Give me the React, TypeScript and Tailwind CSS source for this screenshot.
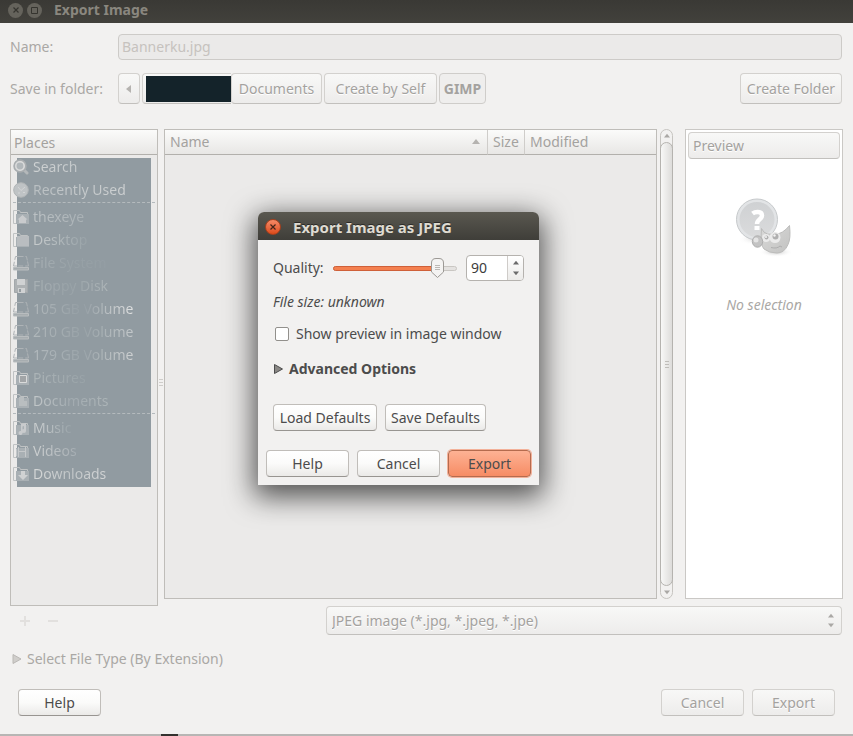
import React, { useState } from "react";

const places = [
  { name: "Search", icon: "search", tone: "from-[#cfd2d3] to-[#c3c8ca]" },
  { name: "Recently Used", icon: "recent", tone: "from-[#b9bfc2] to-[#ced1d2]" },
  { name: "thexeye", icon: "home", tone: "from-[#bcc2c5] to-[#a9b1b5]", line: true },
  { name: "Desktop", icon: "desktop", tone: "from-[#c8cccd] via-[#b0b8bb] to-[#98a2a7]" },
  { name: "File System", icon: "drive", tone: "from-[#a9b1b5] via-[#98a2a7] to-[#949ea4]" },
  { name: "Floppy Disk", icon: "floppy", tone: "from-[#a9b1b5] via-[#98a2a7] to-[#adb5b8]" },
  { name: "105 GB Volume", icon: "drive", tone: "from-[#b1b8bb] via-[#949ea4] to-[#e0e1e1]" },
  { name: "210 GB Volume", icon: "drive", tone: "from-[#b1b8bb] via-[#98a2a7] to-[#c3c8ca]" },
  { name: "179 GB Volume", icon: "drive", tone: "from-[#b3babe] via-[#9aa4a9] to-[#ced1d2]" },
  { name: "Pictures", icon: "pictures", tone: "from-[#adb5b8] to-[#98a2a7]" },
  { name: "Documents", icon: "documents", tone: "from-[#c3c8ca] via-[#a2abb0] to-[#adb5b8]" },
  { name: "Music", icon: "music", tone: "from-[#d0d3d4] to-[#9aa4a9]", line: true },
  { name: "Videos", icon: "videos", tone: "from-[#ced1d2] to-[#a5adb2]" },
  { name: "Downloads", icon: "downloads", tone: "from-[#d6d8d8] via-[#c0c5c7] to-[#d3d5d6]" },
];

const softButton =
  "rounded-[4px] border border-[#d3d1ce] border-b-[#c2c0bd] bg-linear-to-b from-[#f8f8f7] to-[#edeceb] text-[#a4a29f] [text-shadow:0_1px_0_#fff]";
const solidButton =
  "rounded-[4px] border border-[#c0bdb9] border-b-[#989591] bg-linear-to-b from-white via-[#fbfbfa] to-[#ebeae8] text-[#4c4c4c]";
const headCell =
  "h-[25px] border-b border-b-[#b2b0ac] bg-linear-to-b from-[#fbfbfa] to-[#e8e7e5] text-left font-normal text-[#a4a29f]";

const PlaceIcon = ({ icon }: { icon: string }) => {
  if (icon === "search") {
    return (
      <svg width="16" height="16" viewBox="0 0 16 16">
        <path d="M11 11l3 3" stroke="#b4b8ba" strokeWidth="3" strokeLinecap="round" />
        <circle cx="7" cy="7" r="6" fill="#b4babd" stroke="#a9adaf" strokeWidth="1.500" />
        <circle cx="7" cy="7" r="4.200" fill="#b1b7ba" stroke="#dcdcdc" strokeWidth="1.500" />
      </svg>
    );
  }
  if (icon === "recent") {
    return (
      <svg width="16" height="16" viewBox="0 0 16 16">
        <circle cx="8" cy="8" r="7.300" fill="#bfc3c5" stroke="#b0b4b6" />
        <path d="M5 5l3 3.500L12 5M5 11h2M10 10.500h2" fill="none" stroke="#d3d5d6" />
      </svg>
    );
  }
  if (icon === "drive") {
    return (
      <svg width="16" height="16" viewBox="0 0 16 16" fill="none">
        <path d="M2.500 1.500h11l2 9.500H.5z" stroke="#aeb3b6" strokeDasharray="8 2 5 1" />
        <path d="M.5 12.500h15v2.500H.5z" fill="#a7adb0" stroke="#b9bdbf" />
      </svg>
    );
  }
  if (icon === "floppy") {
    return (
      <svg width="16" height="16" viewBox="0 0 16 16">
        <path d="M1.500 1.500h13v13h-13z" fill="#aeb2b4" stroke="#a3a8ab" />
        <path d="M4 1h8v6H4z" fill="#d0d2d3" />
        <path d="M5 10h7v5H5z" fill="#d0d2d3" />
        <path d="M6 11h2v3H6z" fill="#969da1" />
      </svg>
    );
  }
  return (
    <svg width="16" height="16" viewBox="0 0 16 16">
      <path d="M.5 14.500v-13h6l1 2h7v11z" fill="none" stroke="#bfc2c3" />
      <path d="M3 5h13v10H3z" fill="#a9b0b4" />
      {icon === "home" && <path d="M9.500 6l5 4.500H13V14H6v-3.500H4.500z" fill="#c9cbcd" />}
      {icon === "desktop" && <path d="M4 4h12v10H4z" fill="#b9bdc0" />}
      {icon === "pictures" && <path d="M6.500 5.500h7v7h-7z" fill="#a2a5a7" stroke="#dadbdb" />}
      {icon === "documents" && <path d="M6 4h5v4h3v5H6z" fill="#b9bec0" />}
      {icon === "music" && <path d="M8 4l5-1v8a2 2 0 1 1-2-2V6L9.500 6.500V13a2 2 0 1 1-1.500-2z" fill="#c9cbcd" />}
      {icon === "videos" && <path d="M5.500 4v10M12.500 4v10M6 8.500h7M3.500 6v7" stroke="#c5c8ca" />}
      {icon === "downloads" && <path d="M8 5h4v4h3l-5 5-5-5h3z" fill="#d0d2d3" />}
    </svg>
  );
};

const Triangle = ({ dir, className }: { dir: "up" | "down" | "left" | "right"; className: string }) => {
  const shapes = {
    up: "0,6 4,1 8,6",
    down: "0,2 4,7 8,2",
    left: "6,0 1,4 6,8",
    right: "1,0 8,4 1,8",
  };
  return (
    <svg viewBox="0 0 8 8" className={className} aria-hidden="true">
      <polygon points={shapes[dir]} fill="currentColor" />
    </svg>
  );
};

const Wilber = () => (
  <svg width="58" height="60" viewBox="0 0 58 60" aria-hidden="true">
    <defs>
      <linearGradient id="disc" x1="0" y1="0" x2="0" y2="1">
        <stop offset="0" stopColor="#cfd1d3" />
        <stop offset="1" stopColor="#dadbdc" />
      </linearGradient>
      <linearGradient id="fur" x1="0" y1="0" x2="1" y2="1">
        <stop offset="0" stopColor="#dadad9" />
        <stop offset="1" stopColor="#c2c2c1" />
      </linearGradient>
      <radialGradient id="shade">
        <stop offset="0" stopColor="#c2c2c2" />
        <stop offset="1" stopColor="#fff" stopOpacity="0" />
      </radialGradient>
    </defs>
    <ellipse cx="20" cy="41" rx="17" ry="6" fill="url(#shade)" opacity=".6" />
    <ellipse cx="41" cy="54" rx="17" ry="5" fill="url(#shade)" />
    <circle cx="22" cy="21.500" r="20.500" fill="#e2e4e6" stroke="#c6c9cb" />
    <circle cx="22" cy="21.500" r="17.500" fill="url(#disc)" />
    <path
      d="M17.500 15.500q2-1.500 5-1.500 4.500 0 4.500 3.500 0 2-2.500 4t-2.500 4.500"
      fill="none"
      stroke="#fff"
      strokeWidth="4.500"
    />
    <path d="M19.500 28h5v4h-5z" fill="#fff" />
    <path
      d="M26.500 30.500q2 4.500 6 5.500 10 1 15-2 4-2.500 7-6.500 1.500 13-1.500 19-3.500 8.500-11 8.500-8 0-13-4-4-4-2.500-20.500z"
      fill="url(#fur)"
      stroke="#bcbcbb"
    />
    <circle cx="31" cy="40" r="4" fill="#ebebeb" />
    <circle cx="40" cy="39.500" r="5.500" fill="#ebebeb" />
    <circle cx="31.500" cy="39.500" r="2" fill="#b0b0b0" />
    <circle cx="40.500" cy="38.500" r="3" fill="#b0b0b0" />
    <circle cx="31" cy="39" r="1" fill="#f4f4f4" />
    <circle cx="39.500" cy="37.500" r="1.200" fill="#f4f4f4" />
    <path d="M36 49.500q6 1.500 9-1.500l2 1" fill="none" stroke="#aeaeae" />
    <ellipse cx="22.500" cy="43.500" rx="5.200" ry="5.700" fill="#c3c3c3" stroke="#aeaeae" />
    <circle cx="21" cy="42" r="2.500" fill="#e4e4e4" />
  </svg>
);

const ExportDialog = () => {
  const [quality, setQuality] = useState(90);

  return (
    <div
      role="dialog"
      aria-labelledby="jpeg-title"
      className="absolute left-[258px] top-[212px] w-[281px] rounded-t-[6px] bg-[#f2f1f0] text-[#4c4c4c] shadow-[0_8px_28px_4px_rgba(0,0,0,0.65)]"
    >
      <header className="flex h-7 items-center rounded-t-[6px] bg-linear-to-b from-[#5a5850] to-[#3f3e39] px-[7px] pt-px">
        <button
          aria-label="Close"
          className="flex size-4 items-center justify-center rounded-full border border-[#a8401d] bg-linear-to-b from-[#f58a66] to-[#dd4a16]"
        >
          <svg width="6" height="6" viewBox="0 0 6 6" stroke="#42251a" strokeWidth="1.200">
            <path d="M.5.5l5 5M5.500.5l-5 5" />
          </svg>
        </button>
        <h2 id="jpeg-title" className="ml-3 text-[15px] font-bold text-[#dfdbd2] [text-shadow:0_-1px_0_#2c2b28]">
          Export Image as JPEG
        </h2>
      </header>

      <div className="px-[15px] pt-[14px]">
        <div className="flex h-[27px] items-center">
          <label htmlFor="quality" className="w-[60px]">Quality:</label>
          <div className="relative h-5 w-[124px]">
            <div className="mt-2 flex h-[5px] rounded-full border border-[#c9c6c2] bg-[#e4e2e0]">
              <div
                className="-m-px rounded-l-full border border-[#cf6039] bg-[#f4804f]"
                style={{ width: `${quality * 0.93}%` }}
              ></div>
            </div>
            <svg
              width="13"
              height="20"
              viewBox="0 0 13 20"
              className="absolute top-0"
              style={{ left: `${quality * 0.88}%` }}
              aria-hidden="true"
            >
              <path d="M.5 5Q.5.5 5 .5h3q4.500 0 4.500 4.500v9l-6 5.500-6-5.500z" fill="#f4f3f2" stroke="#9c9995" />
              <path d="M4 7.500h5M4 9.500h5M4 11.500h5" stroke="#bab7b3" />
            </svg>
            <input
              id="quality"
              type="range"
              min="0"
              max="100"
              value={quality}
              onChange={(e) => setQuality(Number(e.target.value))}
              className="absolute inset-0 w-full opacity-0"
            />
          </div>
          <div className="ml-[9px] flex h-[26px] w-[58px] overflow-hidden rounded-[4px] border border-[#b5b2ae] bg-white">
            <input
              aria-label="Quality value"
              value={quality}
              onChange={(e) => setQuality(Number(e.target.value) || 0)}
              className="w-10 pl-1 text-[#3c3c3c] outline-none"
            />
            <div className="flex flex-1 flex-col border-l border-[#cfccc9] bg-linear-to-b from-white to-[#ecebe9] py-[2px] text-[#6b6b6b]">
              <button
                aria-label="Increase"
                onClick={() => setQuality(Math.min(100, quality + 1))}
                className="flex flex-1 items-center justify-center"
              >
                <Triangle dir="up" className="size-[6px]" />
              </button>
              <button
                aria-label="Decrease"
                onClick={() => setQuality(Math.max(0, quality - 1))}
                className="flex flex-1 items-center justify-center"
              >
                <Triangle dir="down" className="size-[6px]" />
              </button>
            </div>
          </div>
        </div>

        <p className="mt-[11px] italic">File size: unknown</p>

        <label className="mt-3 flex items-center gap-[7px] pl-[2px]">
          <input
            type="checkbox"
            className="size-[14px] appearance-none rounded-[2px] border border-[#92908c] bg-white checked:bg-[#f4804f]"
          />
          Show preview in image window
        </label>

        <button aria-expanded="false" className="mt-[15px] flex items-center gap-[6px] pl-px font-bold">
          <svg width="9" height="10" viewBox="0 0 9 10" aria-hidden="true">
            <path d="M.5.5v9l8-4.500z" fill="#8a8885" stroke="#4c4c4c" />
          </svg>
          Advanced Options
        </button>

        <div className="mt-[25px] flex gap-2">
          <button className={`h-[27px] w-[104px] ${solidButton}`}>Load Defaults</button>
          <button className={`h-[27px] w-[101px] ${solidButton}`}>Save Defaults</button>
        </div>
      </div>

      <div className="mt-[19px] grid grid-cols-3 gap-2 px-2 pb-2">
        <button className={`h-[27px] ${solidButton}`}>Help</button>
        <button className={`h-[27px] ${solidButton}`}>Cancel</button>
        <button className="h-[27px] rounded-[4px] border border-[#b56b4e] bg-linear-to-b from-[#fdb294] to-[#f68c64] ring-1 ring-[#f3b199]">
          Export
        </button>
      </div>
    </div>
  );
};

const App = () => {
  return (
    <div className="relative flex min-h-screen flex-col bg-[#f2f1f0] font-['Noto_Sans','Open_Sans',sans-serif] text-sm leading-5 text-[#aaa8a5]">
      <header className="flex h-[23px] items-center gap-1 bg-linear-to-b from-[#3a3935] to-[#42413c] px-2 pb-[3px]">
        <button aria-label="Close" className="flex size-[15px] items-center justify-center rounded-full bg-[#65635c] text-[#35342f]">
          <svg width="6" height="6" viewBox="0 0 6 6" stroke="currentColor" strokeWidth="1.200">
            <path d="M.5.5l5 5M5.500.5l-5 5" />
          </svg>
        </button>
        <button aria-label="Maximize" className="flex size-[15px] items-center justify-center rounded-full bg-[#65635c] text-[#35342f]">
          <svg width="7" height="7" viewBox="0 0 7 7" fill="none" stroke="currentColor">
            <path d="M.5.5h6v6h-6z" />
          </svg>
        </button>
        <h1 className="ml-2 text-sm font-bold text-[#8a877f]">Export Image</h1>
      </header>

      <main className="flex flex-1 flex-col px-[10px] pt-[11px]">
        <div className="flex items-center pr-px">
          <label htmlFor="file-name" className="w-[108px]">Name:</label>
          <input
            id="file-name"
            defaultValue="Bannerku.jpg"
            disabled
            className="h-[26px] min-w-0 flex-1 rounded-[4px] border border-[#cdcbc8] bg-[#ebeae9] px-[3px] pb-[2px] text-[#c6c2be]"
          />
        </div>

        <div className="mt-[13px] flex h-[31px] items-center pr-px">
          <span className="w-[108px]">Save in folder:</span>
          <nav aria-label="Folder path" className="flex h-full flex-1">
            <button aria-label="Scroll left" className={`flex w-[22px] items-center justify-center ${softButton}`}>
              <Triangle dir="left" className="size-2 text-[#b5b3b0]" />
            </button>
            <button
              aria-label="Parent folder"
              className={`ml-[2px] w-[89px] rounded-r-none border-r-0 py-[2px] pl-[3px] ${softButton}`}
            >
              <span className="block h-[26px] bg-[#14232a]"></span>
            </button>
            <button className={`w-[91px] ${softButton}`}>Documents</button>
            <button className={`ml-[2px] w-[113px] ${softButton}`}>Create by Self</button>
            <button className="ml-[2px] w-[47px] rounded-[4px] border border-[#cfcdca] bg-[#efeeed] font-bold text-[#a4a29f]">
              GIMP
            </button>
          </nav>
          <button className={`h-full w-[102px] ${softButton}`}>Create Folder</button>
        </div>

        <div className="mt-[25px] flex flex-1">
          <aside className="flex w-[148px] flex-col">
            <section className="relative flex flex-1 flex-col border border-[#bfbdb9] bg-[#ebeae9]">
              <h2 className={`px-[3px] leading-[26px] ${headCell}`}>Places</h2>
              <div className="absolute left-[6px] top-7 h-[329px] w-[134px] bg-[#919ba1]"></div>
              <ul className="relative px-[2px]">
                {places.map((place) => (
                  <li key={place.name}>
                    {place.line && <hr className="mb-[2px] mt-px border-t border-dashed border-[#b4babd]" />}
                    <button className="flex h-[23px] w-full items-center gap-1">
                      <PlaceIcon icon={place.icon} />
                      <span className={`bg-linear-to-r bg-clip-text text-transparent ${place.tone}`}>
                        {place.name}
                      </span>
                    </button>
                  </li>
                ))}
              </ul>
            </section>
            <div className="flex h-[30px] items-center gap-[18px] pl-[10px] text-[#e2e0de]">
              <button aria-label="Add bookmark" disabled>
                <svg width="10" height="10" viewBox="0 0 10 10" stroke="currentColor" strokeWidth="2">
                  <path d="M5 0v10M0 5h10" />
                </svg>
              </button>
              <button aria-label="Remove bookmark" disabled>
                <svg width="10" height="10" viewBox="0 0 10 10" stroke="currentColor" strokeWidth="2">
                  <path d="M0 5h10" />
                </svg>
              </button>
            </div>
          </aside>

          <div className="flex w-[6px] flex-col items-center justify-center gap-[2px]">
            <span className="h-px w-1 bg-[#cfcdca]"></span>
            <span className="h-px w-1 bg-[#cfcdca]"></span>
            <span className="h-px w-1 bg-[#cfcdca]"></span>
          </div>

          <div className="flex min-w-0 flex-1 flex-col">
            <div className="flex flex-1">
              <div className="flex-1 border border-[#bfbdb9] bg-[#ebeae9]">
                <table className="w-full border-separate border-spacing-0">
                  <thead>
                    <tr>
                      <th className={`pl-[5px] ${headCell}`}>
                        <span className="flex items-center justify-between pr-[7px]">
                          Name
                          <Triangle dir="up" className="size-2 text-[#b5b3b0]" />
                        </span>
                      </th>
                      <th className={`w-[37px] border-l border-l-[#cfcdca] pl-[5px] ${headCell}`}>Size</th>
                      <th className={`w-[132px] border-l border-l-[#cfcdca] pl-[5px] ${headCell}`}>Modified</th>
                    </tr>
                  </thead>
                </table>
              </div>

              <div className="ml-[3px] flex w-[13px] flex-col rounded-full border border-[#c6c4c0] bg-[#f2f1f0]">
                <button aria-label="Scroll up" className="flex h-3 items-center justify-center">
                  <Triangle dir="up" className="size-[6px]" />
                </button>
                <div className="-mx-px flex flex-1 flex-col items-center justify-center gap-[2px] rounded-full border border-[#b5b3af] bg-linear-to-r from-[#f8f8f7] to-[#dddcda]">
                  <span className="h-px w-1 bg-[#bfbdb9]"></span>
                  <span className="h-px w-1 bg-[#bfbdb9]"></span>
                  <span className="h-px w-1 bg-[#bfbdb9]"></span>
                </div>
                <button aria-label="Scroll down" className="flex h-3 items-center justify-center">
                  <Triangle dir="down" className="size-[6px]" />
                </button>
              </div>

              <section className="ml-3 w-[158px] border border-[#cac8c5] bg-white p-[2px]">
                <button className={`block h-[27px] w-full px-1 text-left ${softButton}`}>Preview</button>
                <div className="mt-[39px] flex flex-col items-center">
                  <Wilber />
                  <p className="mt-[37px] italic">No selection</p>
                </div>
              </section>
            </div>

            <div className="relative mb-px ml-[162px] mr-px mt-[7px]">
              <select
                aria-label="File type"
                className={`h-[29px] w-full appearance-none px-[5px] ${softButton}`}
              >
                <option>JPEG image (*.jpg, *.jpeg, *.jpe)</option>
              </select>
              <div className="pointer-events-none absolute inset-y-0 right-2 flex flex-col justify-center gap-[3px]">
                <Triangle dir="up" className="size-[6px]" />
                <Triangle dir="down" className="size-[6px]" />
              </div>
            </div>
          </div>
        </div>

        <button aria-expanded="false" className="mt-[13px] flex items-center gap-[5px] self-start pl-[2px]">
          <svg width="10" height="10" viewBox="0 0 10 10" aria-hidden="true">
            <path d="M1 .5v9l8-4.500z" fill="#d0cecb" stroke="#bab8b5" />
          </svg>
          Select File Type (By Extension)
        </button>

        <footer className="mb-[18px] mt-5 flex gap-2 px-2">
          <button className={`mr-auto h-[27px] w-[83px] ${solidButton}`}>Help</button>
          <button className={`h-[27px] w-[83px] ${softButton}`}>Cancel</button>
          <button className={`h-[27px] w-[83px] ${softButton}`}>Export</button>
        </footer>
      </main>

      <div className="flex h-[2px] bg-[#b7b6b4] pl-[161px]">
        <span className="w-[17px] bg-[#33322f]"></span>
      </div>

      <ExportDialog />
    </div>
  );
};

export default App;
